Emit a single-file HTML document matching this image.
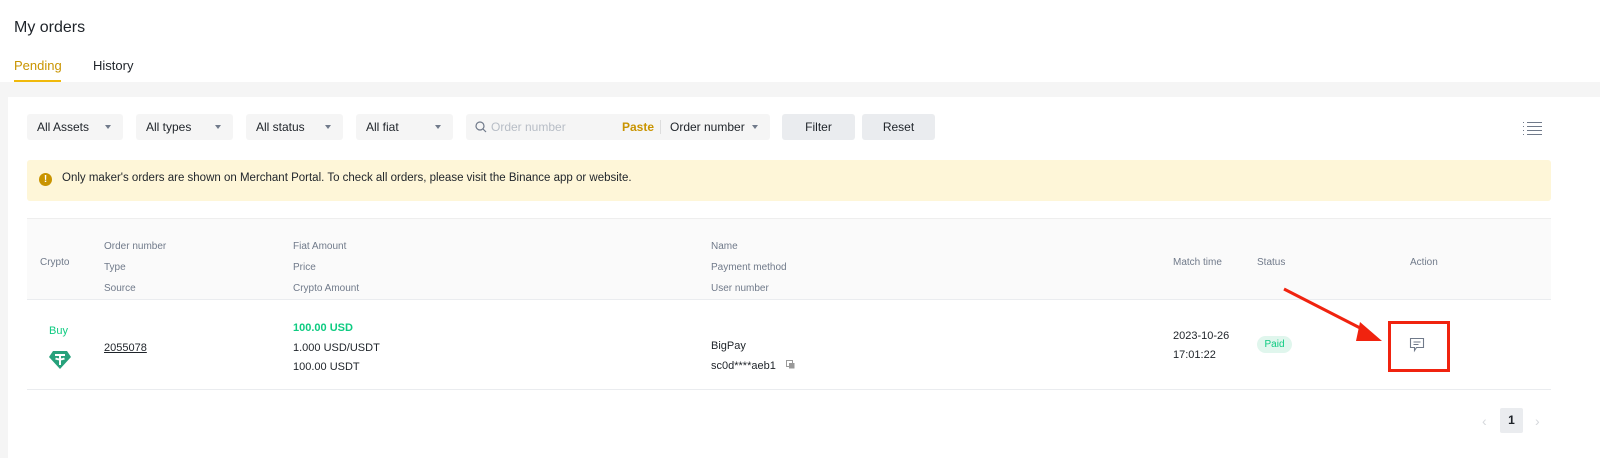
<!DOCTYPE html>
<html><head><meta charset="utf-8"><style>
*{margin:0;padding:0;box-sizing:border-box}
body{width:1600px;height:458px;background:#fff;font-family:"Liberation Sans",sans-serif;color:#1e2329;position:relative;overflow:hidden;font-size:12px}
.a{position:absolute;white-space:nowrap}
.sel{position:absolute;top:114px;height:26px;background:#f5f5f5;border-radius:3px;font-size:12px;line-height:26px;padding-left:10px}
.sel:after{content:"";position:absolute;right:12px;top:11px;border:3.5px solid transparent;border-top:4px solid #707a8a}
.btn{position:absolute;top:114px;height:26px;background:#eaecef;border-radius:3px;font-size:12px;line-height:26px;text-align:center}
.h{color:#707a8a;font-size:10px}
</style></head><body>
<div class="a" style="left:14px;top:19px;font-size:16px">My orders</div>
<div class="a" style="left:14px;top:58px;font-size:13px;color:#c99400">Pending</div>
<div class="a" style="left:14px;top:80px;width:47px;height:2px;background:#f0b90b"></div>
<div class="a" style="left:93px;top:58px;font-size:13px">History</div>
<div class="a" style="left:0;top:82px;width:1600px;height:376px;background:#f5f5f5"></div>
<div class="a" style="left:8px;top:97px;width:1592px;height:361px;background:#fff"></div>

<div class="sel" style="left:27px;width:96px">All Assets</div>
<div class="sel" style="left:136px;width:97px">All types</div>
<div class="sel" style="left:246px;width:97px">All status</div>
<div class="sel" style="left:356px;width:97px">All fiat</div>
<div class="sel" style="left:466px;width:304px;padding-left:0">
<svg class="a" style="left:9px;top:7px" width="12" height="12" viewBox="0 0 12 12"><circle cx="5" cy="5" r="4" fill="none" stroke="#707a8a" stroke-width="1.2"/><path d="M8 8l3 3" stroke="#707a8a" stroke-width="1.2"/></svg>
<span class="a" style="left:25px;color:#b7bdc6">Order number</span>
<span class="a" style="left:156px;color:#c99400;font-weight:bold">Paste</span>
<span class="a" style="left:194px;top:6px;width:1px;height:14px;background:#ddd"></span>
<span class="a" style="left:204px">Order number</span></div>
<div class="btn" style="left:782px;width:73px">Filter</div>
<div class="btn" style="left:862px;width:73px">Reset</div>
<svg class="a" style="left:1523px;top:121px" width="19" height="15" viewBox="0 0 19 15"><g stroke="#707a8a" stroke-width="1"><path d="M0 1.5h1M4 1.5h15M0 5.5h1M4 5.5h15M0 9.5h1M4 9.5h15M0 13.5h1M4 13.5h15"/></g></svg>

<div class="a" style="left:27px;top:160px;width:1524px;height:41px;background:#fef6d8;border-radius:3px"></div>
<div class="a" style="left:39px;top:173px;width:13px;height:13px;border-radius:50%;background:#c99400;color:#fff;font-size:10px;font-weight:bold;text-align:center;line-height:13px">!</div>
<div class="a" style="left:62px;top:172px;font-size:11.5px">Only maker's orders are shown on Merchant Portal. To check all orders, please visit the Binance app or website.</div>

<div class="a" style="left:27px;top:218px;width:1524px;height:82px;background:#fafafa;border-top:1px solid #eee;border-bottom:1px solid #eaecef"></div>
<div class="a h" style="left:40px;top:257px">Crypto</div>
<div class="a h" style="left:104px;top:236px;line-height:21px">Order number<br>Type<br>Source</div>
<div class="a h" style="left:293px;top:236px;line-height:21px">Fiat Amount<br>Price<br>Crypto Amount</div>
<div class="a h" style="left:711px;top:236px;line-height:21px">Name<br>Payment method<br>User number</div>
<div class="a h" style="left:1173px;top:257px">Match time</div>
<div class="a h" style="left:1257px;top:257px">Status</div>
<div class="a h" style="left:1410px;top:257px">Action</div>

<div class="a" style="left:27px;top:389px;width:1524px;height:1px;background:#eaecef"></div>
<div class="a" style="left:49px;top:325px;color:#0ecb81;font-size:11px">Buy</div>
<svg class="a" style="left:49px;top:350px" width="22" height="20" viewBox="0 0 22 20"><path d="M4 1h14l4 6-11 12L0 7z" fill="#26a17b"/><path d="M6 5h10M11 5v10M6.5 8.5c3 1.3 6 1.3 9 0" stroke="#fff" stroke-width="2" fill="none"/></svg>
<div class="a" style="left:104px;top:342px;font-size:11px;text-decoration:underline">2055078</div>
<div class="a" style="left:293px;top:319px;font-size:11px;line-height:19.5px">
<b style="color:#0ecb81">100.00 USD</b><br>1.000 USD/USDT<br>100.00 USDT</div>
<div class="a" style="left:711px;top:336px;font-size:11px;line-height:20px">BigPay<br>sc0d****aeb1</div>
<svg class="a" style="left:786px;top:360px" width="9" height="9" viewBox="0 0 9 9"><rect x="0.5" y="0.5" width="6" height="6" fill="none" stroke="#999"/><rect x="3" y="3" width="5.5" height="5.5" fill="#999"/></svg>
<div class="a" style="left:1173px;top:327px;font-size:11px;line-height:19px">2023-10-26<br>17:01:22</div>
<div class="a" style="left:1257px;top:336px;width:35px;height:17px;border-radius:9px;background:#e0f6ed;color:#0ecb81;font-size:10px;text-align:center;line-height:17px">Paid</div>
<svg class="a" style="left:1409px;top:337px" width="16" height="16" viewBox="0 0 16 16"><path d="M1.5 1.5h13v9h-7l-2 3v-3h-4z" fill="none" stroke="#707a8a" stroke-width="1.1"/><path d="M4.5 5h7M4.5 7.5h5" stroke="#707a8a" stroke-width="1.1"/></svg>
<div class="a" style="left:1388px;top:321px;width:62px;height:51px;border:3px solid #f0230f"></div>
<svg class="a" style="left:1280px;top:285px" width="110" height="60" viewBox="0 0 110 60"><path d="M4 4L86 46" stroke="#f0230f" stroke-width="3"/><path d="M80 37L102 56L76 56z" fill="#f0230f"/></svg>

<div class="a" style="left:1482px;top:413px;color:#d5d8dc;font-size:14px">‹</div>
<div class="a" style="left:1500px;top:408px;width:23px;height:25px;background:#eaecef;border-radius:2px;text-align:center;line-height:25px;font-size:12px;font-weight:bold">1</div>
<div class="a" style="left:1535px;top:413px;color:#d5d8dc;font-size:14px">›</div>
</body></html>
